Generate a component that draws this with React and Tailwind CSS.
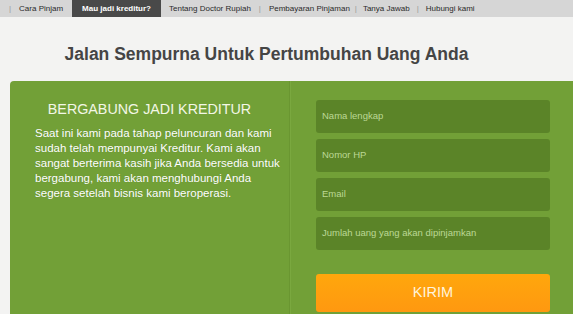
export default function App() {
  const font = { fontFamily: '"Liberation Sans", Arial, sans-serif' };
  const Sep = () => <span className="text-[#9a9a9a] text-[8px]">|</span>;
  const fields = ["Nama lengkap", "Nomor HP", "Email", "Jumlah uang yang akan dipinjamkan"];
  return (
    <div className="w-[573px] h-[314px] overflow-hidden bg-[#f3f3f2]" style={font}>
      <nav className="h-[17px] bg-[#d6d6d6] flex items-center text-[8px] text-[#2a2a2a] whitespace-nowrap pl-[9px]">
        <Sep />
        <span className="ml-[8px]">Cara Pinjam</span>
        <span className="ml-[9px] h-full flex items-center px-[10px] bg-[#494949] text-white font-bold">Mau jadi kreditur?</span>
        <span className="ml-[8px]">Tentang Doctor Rupiah</span>
        <span className="ml-[8px]"><Sep /></span>
        <span className="ml-[8px]">Pembayaran Pinjaman</span>
        <span className="ml-[5px]"><Sep /></span>
        <span className="ml-[6px]">Tanya Jawab</span>
        <span className="ml-[7px]"><Sep /></span>
        <span className="ml-[7px]">Hubungi kami</span>
      </nav>
      <h1 className="mt-[25px] pr-[40px] text-center text-[17.5px] leading-[24px] font-bold text-[#454545]">
        Jalan Sempurna Untuk Pertumbuhan Uang Anda
      </h1>
      <div className="mt-[15px] ml-[10px] h-[260px] rounded-tl-[4px] bg-[#72a037] flex">
        <div className="w-[280px] shrink-0 pt-[20px] border-r border-[#6a9631]">
          <h2 className="text-center text-[14.3px] leading-[16px] text-[#f3f7e6]">BERGABUNG JADI KREDITUR</h2>
          <p className="mt-[9px] pl-[25px] text-[11.5px] leading-[15px] text-white whitespace-nowrap [text-shadow:0_0_1px_rgba(0,0,0,0.15)]">
            Saat ini kami pada tahap peluncuran dan kami<br />
            sudah telah mempunyai Kreditur. Kami akan<br />
            sangat berterima kasih jika Anda bersedia untuk<br />
            bergabung, kami akan menghubungi Anda<br />
            segera setelah bisnis kami beroperasi.
          </p>
        </div>
        <div className="flex-1 border-l border-[#7aa83f] pt-[19px] pl-[25px]">
          <div className="flex flex-col gap-[6px] w-[234px]">
            {fields.map((f) => (
              <div key={f} className="h-[33px] rounded-[3px] bg-[#5b8428] flex items-center pl-[6px] text-[9.5px] text-[#bcd895]">
                {f}
              </div>
            ))}
          </div>
          <div className="mt-[24px] w-[234px] h-[38px] rounded-[3px] bg-gradient-to-b from-[#ffa70c] to-[#ff9810] flex items-center justify-center text-[14.5px] text-[#fff4dc]">
            KIRIM
          </div>
        </div>
      </div>
    </div>
  );
}
